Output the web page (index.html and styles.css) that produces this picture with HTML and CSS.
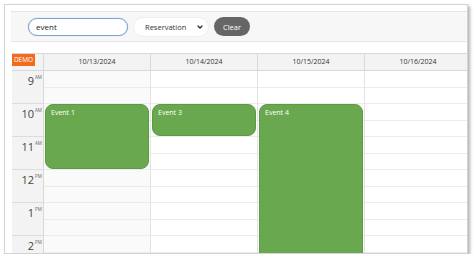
FILE: index.html
```html
<!DOCTYPE html>
<html lang="en">
<head>
  <meta charset="UTF-8">
  <link rel="stylesheet" href="styles.css">
  <title>Calendar</title>
</head>
<body>
  <div class="frame">
    <div class="toolbar">
      <input class="search" type="text" value="event">
      <span class="pick">
        <select class="type">
          <option>Reservation</option>
        </select>
        <svg class="chev" width="6" height="4" viewBox="0 0 6 4"><path d="M0.6 0.6 L3 3 L5.4 0.6" fill="none" stroke="#222" stroke-width="1.3"/></svg>
      </span>
      <button class="clear">Clear</button>
    </div>

    <div class="calendar">
      <div class="cal-head">
        <div class="corner"><span class="demo">DEMO</span></div>
        <div class="col-head">10/13/2024</div>
        <div class="col-head">10/14/2024</div>
        <div class="col-head">10/15/2024</div>
        <div class="col-head">10/16/2024</div>
      </div>
      <div class="cal-body">
        <div class="hours">
          <div class="hour"><span class="num">9</span><span class="ap">AM</span></div>
          <div class="hour"><span class="num">10</span><span class="ap">AM</span></div>
          <div class="hour"><span class="num">11</span><span class="ap">AM</span></div>
          <div class="hour"><span class="num">12</span><span class="ap">PM</span></div>
          <div class="hour"><span class="num">1</span><span class="ap">PM</span></div>
          <div class="hour"><span class="num">2</span><span class="ap">PM</span></div>
        </div>
        <div class="day off">
          <div class="cell"></div><div class="cell"></div><div class="cell"></div><div class="cell"></div>
          <div class="cell"></div><div class="cell"></div><div class="cell"></div><div class="cell"></div>
          <div class="cell"></div><div class="cell"></div><div class="cell"></div><div class="cell"></div>
          <div class="event" style="top: 33px; height: 65px;">Event 1</div>
        </div>
        <div class="day">
          <div class="cell"></div><div class="cell"></div><div class="cell"></div><div class="cell"></div>
          <div class="cell"></div><div class="cell"></div><div class="cell"></div><div class="cell"></div>
          <div class="cell"></div><div class="cell"></div><div class="cell"></div><div class="cell"></div>
          <div class="event" style="top: 33px; height: 32px;">Event 3</div>
        </div>
        <div class="day">
          <div class="cell"></div><div class="cell"></div><div class="cell"></div><div class="cell"></div>
          <div class="cell"></div><div class="cell"></div><div class="cell"></div><div class="cell"></div>
          <div class="cell"></div><div class="cell"></div><div class="cell"></div><div class="cell"></div>
          <div class="event" style="top: 33px; height: 180px;">Event 4</div>
        </div>
        <div class="day">
          <div class="cell"></div><div class="cell"></div><div class="cell"></div><div class="cell"></div>
          <div class="cell"></div><div class="cell"></div><div class="cell"></div><div class="cell"></div>
          <div class="cell"></div><div class="cell"></div><div class="cell"></div><div class="cell"></div>
        </div>
      </div>
    </div>
  </div>
</body>
</html>
```

FILE: styles.css
```css
* {
  margin: 0;
  padding: 0;
  box-sizing: border-box;
}

body {
  background-color: #fff;
  font-family: 'Open Sans', 'Noto Sans', sans-serif;
  color: #333;
}

.frame {
  margin: 4px 0 0 4px;
  width: 464px;
  height: 250px;
  border: 1px solid #d4d4d4;
  box-shadow: 2px 2px 3px rgba(0, 0, 0, 0.3);
  background: #fff;
  overflow: hidden;
  padding: 6px 0 0 6px;
}

.toolbar {
  height: 31px;
  display: flex;
  align-items: center;
  gap: 5px;
  padding-left: 17px;
  background: #f7f7f7;
  border-top: 1px solid #e6e6e6;
  border-bottom: 1px solid #e6e6e6;
}

.search {
  width: 100px;
  height: 18px;
  border: 1px solid #7aa3d6;
  border-radius: 10px;
  padding: 0 7px;
  font-family: inherit;
  font-size: 8px;
  color: #222;
  background: #fff;
  box-shadow: 0 0 1px rgba(80, 130, 200, 0.5);
  outline: none;
}

.pick {
  position: relative;
  display: flex;
}

.type {
  appearance: none;
  width: 76px;
  height: 20px;
  border: 1px solid #eee;
  border-radius: 10px;
  background: #fff;
  padding-left: 11px;
  font-family: inherit;
  font-size: 7.5px;
  color: #333;
  outline: none;
}

.chev {
  position: absolute;
  right: 6px;
  top: 8px;
}

.clear {
  width: 36px;
  height: 19px;
  border: none;
  border-radius: 10px;
  background: #666;
  color: #fff;
  font-family: inherit;
  font-size: 7.5px;
}

.calendar {
  margin-top: 11px;
  margin-left: 1px;
  width: 500px;
  border-top: 1px solid #d8d8d8;
}

.cal-head {
  display: flex;
  height: 17px;
  background: #f3f3f3;
  border-bottom: 1px solid #d8d8d8;
}

.corner {
  width: 32px;
  border-right: 1px solid #d8d8d8;
}

.demo {
  display: block;
  width: 23px;
  height: 12px;
  background: #f36a1d;
  color: #fff;
  font-size: 6.5px;
  line-height: 12px;
  text-align: center;
}

.col-head {
  width: 107px;
  border-right: 1px solid #d8d8d8;
  font-size: 7px;
  line-height: 16px;
  text-align: center;
  color: #333;
}

.cal-body {
  display: flex;
}

.hours {
  width: 32px;
  background: #f3f3f3;
  border-right: 1px solid #d8d8d8;
}

.hour {
  height: 33px;
  border-bottom: 1px solid #dcdcdc;
  display: flex;
  justify-content: flex-end;
  padding: 3px 1px 0 0;
}

.num {
  font-size: 11px;
  line-height: 13px;
  color: #444;
}

.ap {
  width: 7px;
  font-size: 4.5px;
  line-height: 7px;
  color: #666;
  margin-left: 1px;
}

.day {
  position: relative;
  width: 107px;
  border-right: 1px solid #e2e2e2;
}

.day.off {
  background: #fafafa;
}

.cell {
  height: 16.5px;
  border-bottom: 1px solid #ebebeb;
}

.event {
  position: absolute;
  left: 1px;
  width: 104px;
  background: #6aa84f;
  border: 1px solid #5d9a44;
  border-radius: 8px;
  color: #fff;
  font-size: 7px;
  padding: 3px 5px;
}
```
